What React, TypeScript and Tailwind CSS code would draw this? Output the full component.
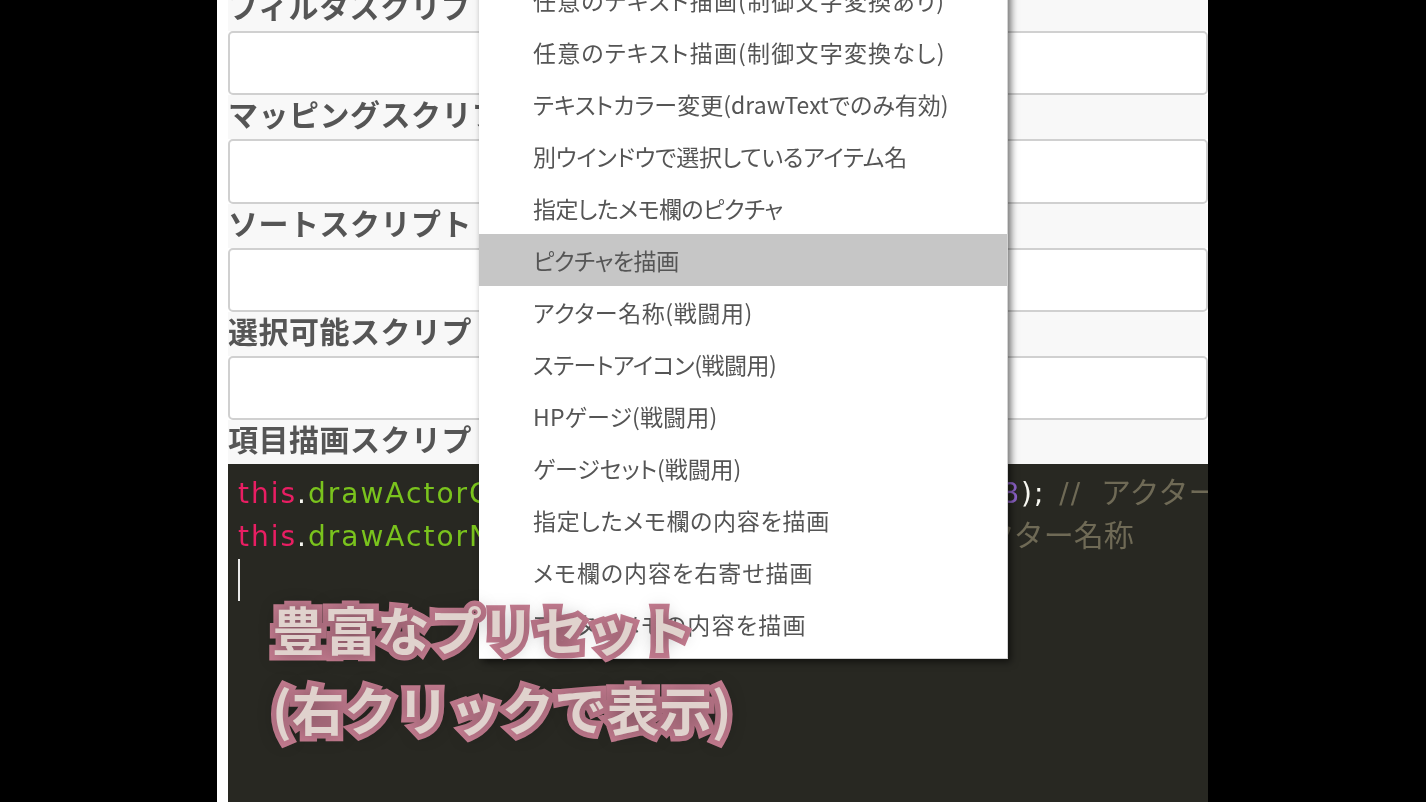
const MENU_ITEMS = [
  { label: "任意のテキスト描画(制御文字変換あり)", track: "tracking-[1.2px]" },
  { label: "任意のテキスト描画(制御文字変換なし)", track: "tracking-[1.2px]" },
  { label: "テキストカラー変更(drawTextでのみ有効)", track: "tracking-[0.03px]" },
  { label: "別ウインドウで選択しているアイテム名", track: "tracking-[-0.2px]" },
  { label: "指定したメモ欄のピクチャ", track: "tracking-[-0.55px]" },
  { label: "ピクチャを描画", track: "tracking-[-0.45px]" },
  { label: "アクター名称(戦闘用)", track: "tracking-[0.6px]" },
  { label: "ステートアイコン(戦闘用)", track: "tracking-[-0.45px]" },
  { label: "HPゲージ(戦闘用)", track: "tracking-[0.15px]" },
  { label: "ゲージセット(戦闘用)", track: "tracking-[-0.1px]" },
  { label: "指定したメモ欄の内容を描画", track: "tracking-[0.7px]" },
  { label: "メモ欄の内容を右寄せ描画", track: "tracking-[1px]" },
  { label: "アクターメモの内容を描画", track: "tracking-[1.2px]" },
];

const SCRIPT_FIELDS = ["フィルタスクリプト", "マッピングスクリプト", "ソートスクリプト", "選択可能スクリプト"];

const CJK = "font-['Noto_Sans_CJK_JP','Noto_Sans',sans-serif]";

function FieldLabel({ text, first }: { text: string; first?: boolean }) {
  return (
    <div
      className={`h-[44px] shrink-0 whitespace-nowrap bg-[#f8f8f8] text-[30px] leading-[36px] font-bold tracking-[0.5px] text-[#555] ${first ? "-mt-[13px]" : ""}`}
    >
      {text}
    </div>
  );
}

function CodeLines() {
  return (
    <div className="h-[338px] overflow-hidden bg-[#282822] px-[10px] pt-[5px] font-['DejaVu_Sans',sans-serif] text-[28px] tracking-[2px] whitespace-nowrap text-[#f8f8f2]">
      <div className="h-[43px] leading-[43px]">
        <span className="text-[#e91e63]">this</span>.<span className="text-[#7ac31d]">drawActorCharacter</span>
        <span className="tracking-[1.45px]">(actor, rect.x, rect.y + </span>
        <span className="text-[#8e63c9]">48</span>);{" "}
        <span className="ml-[3px] text-[#6f6a56]">
          // <span className={`${CJK} ml-[8px] text-[30px] tracking-normal`}>アクター名</span>
        </span>
      </div>
      <div className="h-[43px] leading-[43px]">
        <span className="text-[#e91e63]">this</span>.<span className="text-[#7ac31d]">drawActorName</span>
        (actor, rect.x, rect.y);{" "}
        <span className="text-[#6f6a56]">
          // <span className={`${CJK} ml-[5px] text-[30px] tracking-normal`}>アクター名称</span>
        </span>
      </div>
      <div className="h-[43px] pt-[4px]">
        <div className="h-[42px] w-[2px] bg-[#e8e8e8]" />
      </div>
    </div>
  );
}

export default function App() {
  return (
    <div className={`relative flex h-[802px] overflow-hidden bg-black ${CJK} blur-[0.5px]`}>
      <div className="w-[217px] shrink-0" />
      <div className="flex w-[991px] shrink-0 flex-col bg-white pl-[11px]">
        {SCRIPT_FIELDS.map((label, i) => (
          <div key={label} className="flex flex-col">
            <FieldLabel text={label} first={i === 0} />
            <div className="h-[64.25px] shrink-0 rounded-[5px] border-2 border-[#d0d0d0] bg-white" />
          </div>
        ))}
        <FieldLabel text="項目描画スクリプト" />
        <CodeLines />
      </div>
      <div className="flex-1" />

      <div className="absolute top-[-26px] left-[479px] w-[529px] border-r border-b border-[#d4d4d4] bg-white pb-[8px] shadow-[3px_3px_7px_rgba(0,0,0,0.55)]">
        {MENU_ITEMS.map((item) => (
          <div
            key={item.label}
            className={`h-[52px] whitespace-nowrap pl-[54px] text-[23px] leading-[52px] text-[#555] [font-feature-settings:'palt'] ${item.track} ${item.label === "ピクチャを描画" ? "bg-[#c6c6c6]" : ""}`}
          >
            {item.label}
          </div>
        ))}
      </div>

      <div className="absolute top-[588px] left-[272px] text-[52.5px] leading-[80px] font-bold whitespace-nowrap text-[#e0d2cd] [paint-order:stroke_fill] [-webkit-text-stroke:11px_#c47c90] [text-shadow:0_0_18px_rgba(0,0,0,0.4)]">
        <div>豊富なプリセット</div>
        <div>(右クリックで表示)</div>
      </div>
    </div>
  );
}
